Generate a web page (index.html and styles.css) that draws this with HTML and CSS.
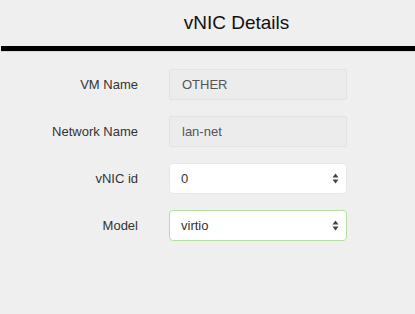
FILE: index.html
```html
<!DOCTYPE html>
<html>
<head>
<meta charset="utf-8">
<link rel="stylesheet" href="styles.css">
</head>
<body>
<div class="page">
  <header class="header">
    <h1 class="title">vNIC Details</h1>
  </header>
  <div class="bar"></div>
  <form class="form">
    <div class="row">
      <label class="label">VM Name</label>
      <div class="field readonly">OTHER</div>
    </div>
    <div class="row">
      <label class="label">Network Name</label>
      <div class="field readonly">lan-net</div>
    </div>
    <div class="row">
      <label class="label">vNIC id</label>
      <div class="field select">0
        <svg class="arrows" width="7" height="11" viewBox="0 0 7 11"><path d="M3.5 0.5 L6.5 4.5 L0.5 4.5 Z M3.5 10.5 L6.5 6.5 L0.5 6.5 Z" fill="#444"/></svg>
      </div>
    </div>
    <div class="row">
      <label class="label">Model</label>
      <div class="field select valid">virtio
        <svg class="arrows" width="7" height="11" viewBox="0 0 7 11"><path d="M3.5 0.5 L6.5 4.5 L0.5 4.5 Z M3.5 10.5 L6.5 6.5 L0.5 6.5 Z" fill="#444"/></svg>
      </div>
    </div>
  </form>
</div>
</body>
</html>
```
FILE: styles.css
```css
html, body {
  margin: 0;
  padding: 0;
  background: #efefef;
}
.page {
  width: 415px;
  height: 314px;
  font-family: "Liberation Sans", Arial, sans-serif;
  color: #222;
}
.header {
  height: 46px;
  display: flex;
  align-items: center;
  justify-content: center;
  padding-left: 58px;
  box-sizing: border-box;
}
.title {
  margin: 0;
  font-size: 19px;
  font-weight: normal;
  color: #111;
}
.bar {
  height: 5px;
  background: #000;
  margin-left: 1px;
  border-bottom: 1px solid #d6d6d6;
}
.form {
  display: flex;
  flex-direction: column;
  gap: 16px;
  padding-top: 17px;
}
.row {
  display: flex;
  align-items: center;
  gap: 31px;
}
.label {
  width: 138px;
  text-align: right;
  font-size: 13px;
  color: #333;
}
.field {
  width: 178px;
  height: 31px;
  box-sizing: border-box;
  display: flex;
  align-items: center;
  padding-left: 12px;
  padding-right: 7px;
  font-size: 13px;
  border-radius: 4px;
  border: 1px solid #e8e8e8;
  background: #fff;
  color: #333;
}
.readonly {
  background: #ececec;
  border: 1px solid #e2e2e2;
  border-radius: 2px;
  color: #555;
}
.select {
  justify-content: space-between;
  padding-left: 11px;
}
.valid {
  border: 1px solid #b5dfa1;
}
.arrows {
  display: block;
}
```
